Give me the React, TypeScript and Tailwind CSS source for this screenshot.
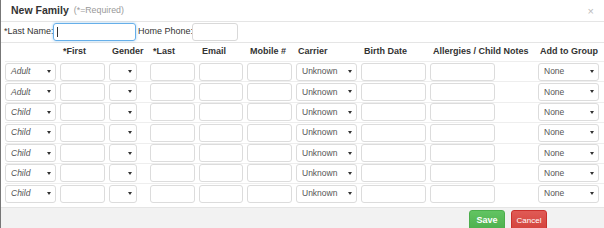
import React from 'react'

const rows = ['Adult', 'Adult', 'Child', 'Child', 'Child', 'Child', 'Child']

const cols = 'grid grid-cols-[55px_49px_41px_49px_48px_49px_65px_69px_108px_61px]'

function Caret() {
  return <span className="ml-auto w-0 h-0 border-x-[2.5px] border-x-transparent border-t-[3px] border-t-[#333]" />
}

function Select({ w, label, italic = false }: { w: string; label?: string; italic?: boolean }) {
  return (
    <div
      className={`${w} h-[18px] flex items-center pl-[5px] pr-[4px] border border-[#dcdcdc] rounded-[3px] bg-white text-[8.5px] text-[#555] ${
        italic ? 'italic' : ''
      }`}
    >
      {label && <span>{label}</span>}
      <Caret />
    </div>
  )
}

function Box({ w }: { w: string }) {
  return <div className={`${w} h-[18px] border border-[#dcdcdc] rounded-[3px] bg-white`} />
}

export default function App() {
  return (
    <div
      className="w-[604px] h-[228px] overflow-hidden bg-white border-l border-[#777] flex flex-col relative text-[#333]"
      style={{ fontFamily: '"Liberation Sans", Arial, sans-serif' }}
    >
      {/* header */}
      <div className="h-[22px] shrink-0 flex items-center pl-[10px] border-b border-[#e5e5e5]">
        <span className="text-[10.5px] font-bold">New Family</span>
        <span className="ml-[5px] text-[8.8px] text-[#999]">(*=Required)</span>
        <span className="absolute right-[10px] top-[3px] text-[11px] text-[#bbb]">×</span>
      </div>

      {/* family row */}
      <div className="h-[21px] shrink-0 flex items-center pl-[3px] border-b border-[#e5e5e5] text-[9px] whitespace-nowrap">
        <span className="w-[49px] shrink-0">*Last Name:</span>
        <div className="w-[83px] shrink-0 h-[18px] rounded-[3px] border border-[#66afe9] shadow-[0_0_3px_rgba(102,175,233,0.6)] flex items-center pl-[3px]">
          <span className="w-px h-[10px] bg-[#333]" />
        </div>
        <span className="ml-[2px] w-[54px] shrink-0">Home Phone:</span>
        <div className="w-[46px] shrink-0 h-[18px] rounded-[3px] border border-[#d9d9d9]" />
      </div>

      {/* table */}
      <div className="pl-[4px] shrink-0">
        <div className={`${cols} h-[18px] items-center text-[9px] font-bold whitespace-nowrap`}>
          <span />
          <span className="pl-[3px]">*First</span>
          <span className="pl-[3px]">Gender</span>
          <span className="pl-[3px]">*Last</span>
          <span className="pl-[3px]">Email</span>
          <span className="pl-[3px]">Mobile #</span>
          <span className="pl-[2px]">Carrier</span>
          <span className="pl-[3px]">Birth Date</span>
          <span className="pl-[3px]">Allergies / Child Notes</span>
          <span className="pl-[2px]">Add to Group</span>
        </div>
        {rows.map((r, i) => (
          <div key={i} className={`${cols} h-[20.4px] border-t border-[#eee] pt-[0.5px]`}>
            <Select w="w-[51px]" label={r} italic />
            <Box w="w-[45px]" />
            <Select w="w-[28px]" />
            <Box w="w-[45px]" />
            <Box w="w-[44px]" />
            <Box w="w-[45px]" />
            <Select w="w-[61px]" label="Unknown" />
            <Box w="w-[65px]" />
            <Box w="w-[65px]" />
            <Select w="w-[61px]" label="None" />
          </div>
        ))}
      </div>

      {/* footer */}
      <div className="mt-auto h-[21px] shrink-0 border-t border-[#e5e5e5] bg-[#f2f2f2] flex justify-end items-start gap-[6px] pr-[57px] pt-[2px]">
        <button className="w-[36px] h-[22px] rounded-[3px] border border-[#4cae4c] bg-gradient-to-b from-[#62c462] to-[#4cae4c] text-white text-[9px] font-bold">
          Save
        </button>
        <button className="w-[36px] h-[22px] rounded-[3px] border border-[#c9302c] bg-gradient-to-b from-[#e05a55] to-[#d23f3a] text-white text-[8px]">
          Cancel
        </button>
      </div>
    </div>
  )
}
